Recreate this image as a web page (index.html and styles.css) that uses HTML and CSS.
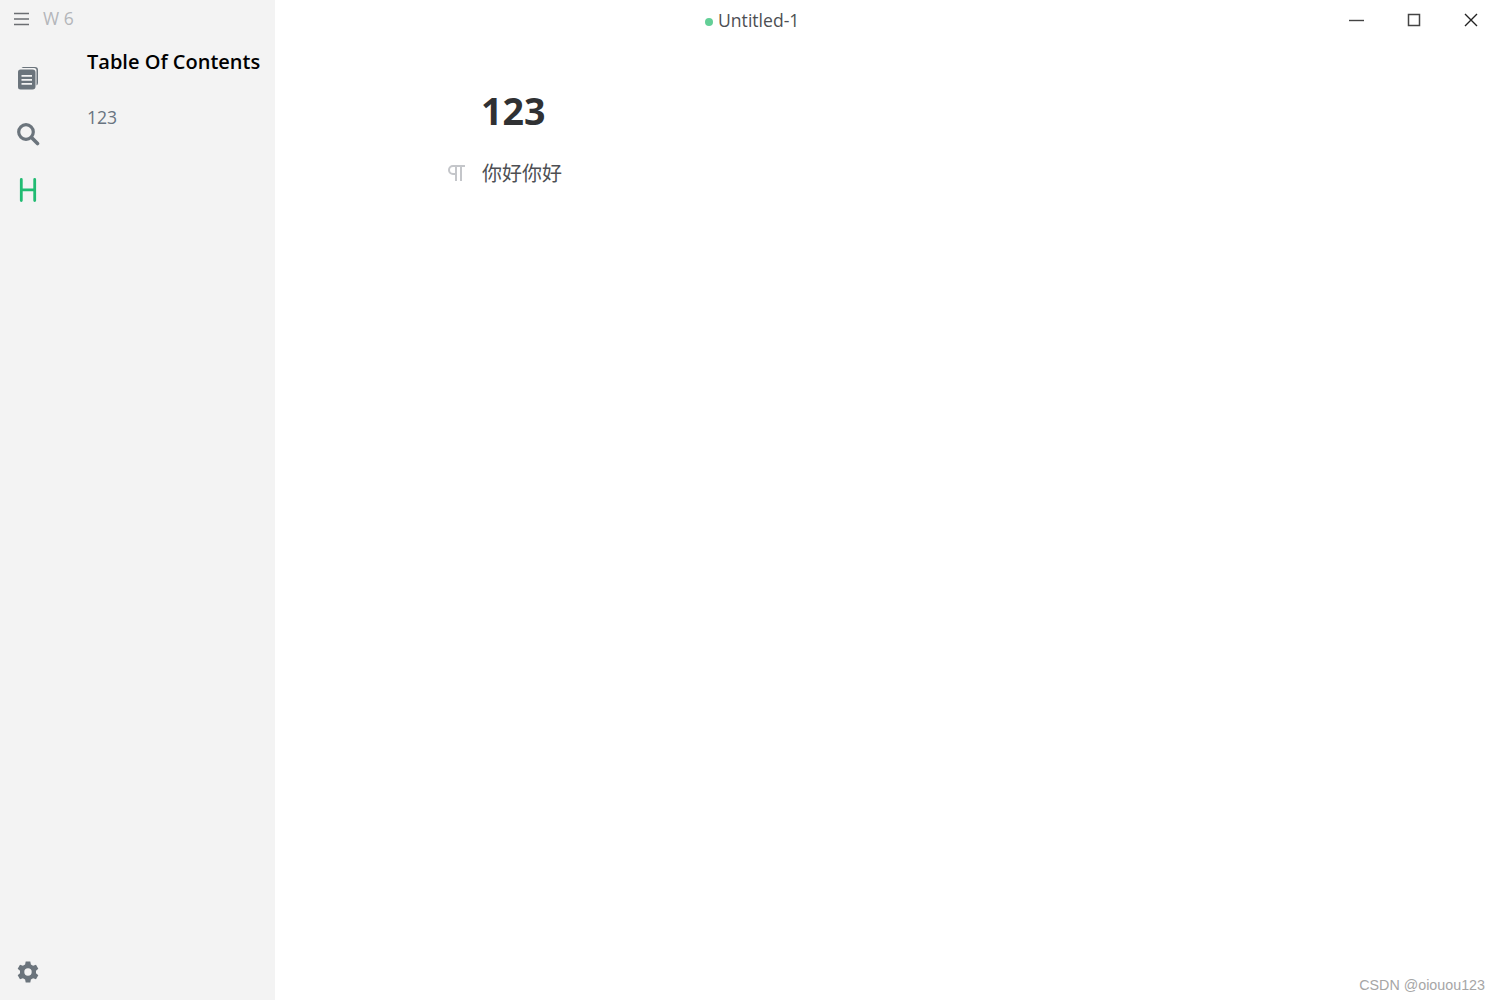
FILE: index.html
```html
<!DOCTYPE html>
<html lang="zh">
<head>
<meta charset="utf-8">
<title>Untitled-1</title>
<link rel="stylesheet" href="styles.css">
</head>
<body>
<div class="app">
  <aside class="sidebar">
    <div class="sidebar-top">
      <svg class="menu-icon" width="16" height="14" viewBox="0 0 16 14"><path d="M0 1.500h15M0 7h15M0 12.500h15" stroke="#6b6e72" stroke-width="1.300" fill="none"/></svg>
      <span class="word-count">W 6</span>
    </div>
    <div class="sidebar-body">
      <nav class="rail">
        <div class="rail-main">
          <svg class="rail-icon" width="22" height="24" viewBox="0 0 22 24"><path d="M6 1h12a3 3 0 0 1 3 3v13a3 3 0 0 1-1.500 2.500V4.500A2.500 2.500 0 0 0 17 2H4.500A3 3 0 0 1 6 1z" fill="#6b747c"/><path d="M3.500 3.500h12a3 3 0 0 1 3 3v14a3 3 0 0 1-3 3h-12A2.500 2.500 0 0 1 1 21V6a2.500 2.500 0 0 1 2.500-2.500zM4.500 9v1.800h10.500V9zM4.500 13v1.800h10.500V13zM4.500 17v1.800h10.500V17z" fill="#6b747c" fill-rule="evenodd"/></svg>
          <svg class="rail-icon" width="24" height="24" viewBox="0 0 24 24"><circle cx="10" cy="10" r="7.300" fill="none" stroke="#6b747c" stroke-width="3.200"/><path d="M15.500 15.500l6 6" stroke="#6b747c" stroke-width="3.600" stroke-linecap="round"/></svg>
          <svg class="rail-icon" width="24" height="24" viewBox="0 0 24 24"><path d="M5.300 1.500v21M18.700 1.500v21M5.300 11.800h13.400" fill="none" stroke="#21bb72" stroke-width="2.800" stroke-linecap="round"/></svg>
        </div>
        <svg class="gear" width="24" height="24" viewBox="0 0 24 24"><path fill="#6b747c" fill-rule="evenodd" d="M9.700 1.500h4.600l.6 3 2.200 1.200 2.900-1 2.300 4-2.300 2v2.600l2.300 2-2.300 4-2.900-1-2.200 1.200-.6 3H9.700l-.6-3-2.200-1.200-2.900 1-2.300-4 2.300-2v-2.600l-2.300-2 2.300-4 2.900 1 2.200-1.200zM12 8.300a3.700 3.700 0 1 0 0 7.400 3.700 3.700 0 0 0 0-7.400z"/></svg>
      </nav>
      <section class="toc">
        <h2 class="toc-title">Table Of Contents</h2>
        <div class="toc-item">123</div>
      </section>
    </div>
  </aside>
  <main class="main">
    <header class="titlebar">
      <div class="doc-title"><span class="dot"></span><span>Untitled-1</span></div>
      <div class="win-controls">
        <svg width="16" height="16" viewBox="0 0 16 16"><path d="M0 8.500h15" stroke="#444" stroke-width="1.400"/></svg>
        <svg width="16" height="16" viewBox="0 0 16 16"><rect x="2.500" y="2.500" width="11" height="11" fill="none" stroke="#444" stroke-width="1.500"/></svg>
        <svg width="16" height="16" viewBox="0 0 16 16"><path d="M2 2l12 12M14 2L2 14" stroke="#222" stroke-width="1.400"/></svg>
      </div>
    </header>
    <article class="doc">
      <h1 class="doc-heading">123</h1>
      <div class="para">
        <svg class="para-mark" width="18" height="17" viewBox="0 0 18 17"><path d="M8 1H5a4 4 0 0 0 0 8h3M8 1v15M8 1h9M13 1v15" fill="none" stroke="#c4c6ca" stroke-width="2"/></svg>
        <p class="para-text">你好你好</p>
      </div>
    </article>
    <div class="watermark">CSDN @oiouou123</div>
  </main>
</div>
</body>
</html>
```

FILE: styles.css
```css
* { box-sizing: border-box; }
html, body { margin: 0; height: 100%; overflow: hidden; }
body { font-family: "Open Sans", "Noto Sans CJK SC", sans-serif; background: #fff; color: #303133; }
.app { display: flex; height: 1000px; }

.sidebar { width: 275px; flex: none; background: #f3f3f3; display: flex; flex-direction: column; }
.sidebar-top { height: 36px; padding-left: 14px; display: flex; align-items: center; gap: 13px; }
.menu-icon { margin-top: 2px; }
.word-count { font-size: 17.500px; color: #b4b6ba; line-height: 34px; margin-top: -1px; }
.sidebar-body { flex: 1; display: flex; min-height: 0; }

.rail { width: 56px; flex: none; display: flex; flex-direction: column; align-items: center; justify-content: space-between; padding: 30px 0 16px; }
.rail-main { display: flex; flex-direction: column; align-items: center; gap: 32px; }
.rail-icon { display: block; }

.toc { flex: 1; padding-left: 31px; }
.toc-title { margin: 11px 0 0; font-size: 20px; line-height: 30px; font-weight: 600; color: #000; }
.toc-item { margin-top: 27px; font-size: 17.600px; line-height: 26px; color: #687480; }

.main { flex: 1; position: relative; display: flex; flex-direction: column; min-width: 0; }
.titlebar { height: 40px; flex: none; position: relative; display: flex; justify-content: flex-end; align-items: center; }
.doc-title { position: absolute; left: 430px; top: 7px; display: flex; align-items: center; gap: 5px; font-size: 17.600px; line-height: 26px; color: #4d4f53; }
.dot { width: 8px; height: 8px; border-radius: 50%; background: #63cf97; margin-top: 4px; }
.win-controls { display: flex; gap: 41px; padding-right: 21px; }

.doc { padding: 43px 0 0 206px; }
.doc-heading { margin: 0; font-size: 37.600px; line-height: 56px; font-weight: 700; color: #303133; }
.para { position: relative; margin-top: 19px; padding-left: 1px; }
.para-mark { position: absolute; left: -33px; top: 7px; }
.para-text { margin: 0; font-size: 20px; line-height: 32px; color: #4d4f53; }

.watermark { position: absolute; right: 15px; bottom: 6px; font-family: "Liberation Sans", sans-serif; font-size: 14.300px; line-height: 18px; color: #a6a6a6; }
```
